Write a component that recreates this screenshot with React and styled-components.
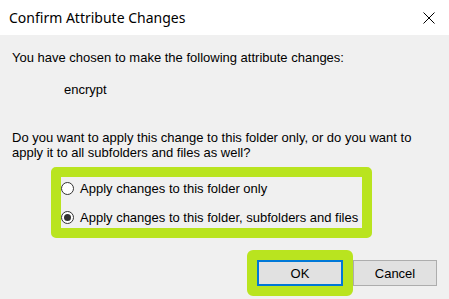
import React from "react";
import styled, { createGlobalStyle } from "styled-components";

const Global = createGlobalStyle`
  html, body { margin: 0; padding: 0; background: #f0f0f0; }
  body { width: 449px; height: 299px; overflow: hidden; }
`;

const Window = styled.div`
  width: 449px;
  height: 299px;
  display: flex;
  flex-direction: column;
  background: #f0f0f0;
  font-family: "Liberation Sans", Arial, sans-serif;
  font-size: 13px;
  color: #000;
`;

const TitleBar = styled.div`
  height: 35px;
  flex: none;
  background: #fff;
  display: flex;
  align-items: center;
  justify-content: space-between;
  padding: 0 14px 0 9px;
`;

const Title = styled.span`
  font-family: "Noto Sans", "Open Sans", sans-serif;
  font-size: 14px;
  color: #000;
  padding-bottom: 1px;
`;

const Body = styled.div`
  display: flex;
  flex-direction: column;
  padding: 15px 12px 0 12px;
`;

const Line = styled.div`
  line-height: 15px;
  margin-top: ${(p) => p.$gap || 0}px;
  padding-left: ${(p) => p.$indent || 0}px;
  white-space: nowrap;
`;

const Highlight = styled.div`
  margin: 7px 0 0 39px;
  width: 301px;
  border: 10px solid #b9e41f;
  border-radius: 5px;
  display: flex;
  flex-direction: column;
  gap: 14px;
  padding: 4px 0 3px 0;
`;

const Option = styled.label`
  display: flex;
  align-items: center;
  gap: 6px;
  height: 15px;
  white-space: nowrap;
`;

const Radio = styled.span`
  width: 11px;
  height: 11px;
  border: 1px solid #333;
  border-radius: 50%;
  background: #fff;
  display: flex;
  align-items: center;
  justify-content: center;
  flex: none;
  &::after {
    content: "";
    width: 7px;
    height: 7px;
    border-radius: 50%;
    background: ${(p) => (p.$checked ? "#333" : "transparent")};
  }
`;

const Buttons = styled.div`
  display: flex;
  justify-content: flex-end;
  align-items: flex-start;
  padding: 12px 12px 0 0;
`;

const Focus = styled.div`
  border: 10px solid #b9e41f;
  border-radius: 6px;
  display: flex;
`;

const Button = styled.button`
  width: ${(p) => p.$w}px;
  height: 26px;
  margin-top: ${(p) => p.$top || 0}px;
  box-sizing: border-box;
  background: #e1e1e1;
  border: ${(p) => (p.$default ? "2px solid #0078d7" : "1px solid #adadad")};
  font-family: "Liberation Sans", Arial, sans-serif;
  font-size: 13px;
  color: #000;
  padding: 0;
`;

export default function App() {
  return (
    <>
      <Global />
      <Window>
        <TitleBar>
          <Title>Confirm Attribute Changes</Title>
          <svg width="12" height="12" viewBox="0 0 12 12">
            <path d="M0.5 0.5L11.5 11.5M11.5 0.5L0.5 11.5" stroke="#000" strokeWidth="1" fill="none" />
          </svg>
        </TitleBar>
        <Body>
          <Line>You have chosen to make the following attribute changes:</Line>
          <Line $gap={17} $indent={52}>encrypt</Line>
          <Line $gap={33}>Do you want to apply this change to this folder only, or do you want to</Line>
          <Line>apply it to all subfolders and files as well?</Line>
          <Highlight>
            <Option>
              <Radio />
              Apply changes to this folder only
            </Option>
            <Option>
              <Radio $checked />
              Apply changes to this folder, subfolders and files
            </Option>
          </Highlight>
        </Body>
        <Buttons>
          <Focus>
            <Button $w={86} $default>OK</Button>
          </Focus>
          <Button $w={84} $top={10}>Cancel</Button>
        </Buttons>
      </Window>
    </>
  );
}
